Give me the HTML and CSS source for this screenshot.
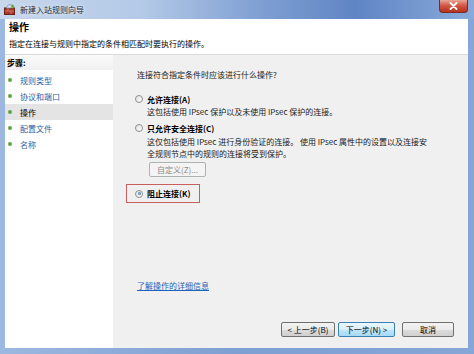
FILE: index.html
```html
<!DOCTYPE html>
<html>
<head>
    <meta charset="UTF-8">
    <title>新建入站规则向导</title>
    <link rel="stylesheet" href="styles.css">
</head>
<body>
    <div class="window">
        <!-- Title bar -->
        <div class="titlebar">
            <svg class="app-icon" width="11" height="11" viewBox="0 0 11 11">
                <rect x="0.5" y="4" width="10" height="6.5" fill="#a8372a" stroke="#6e1f16" stroke-width="1"/>
                <path d="M1 7 H10 M4 4 V7 M7 7 V10" stroke="#d98a70" stroke-width="0.8"/>
                <path d="M2 4 L4.5 0.8 L8.5 0.8 L9.5 4 Z" fill="#d6dde6" stroke="#7a8796" stroke-width="0.7"/>
                <circle cx="8.6" cy="2.4" r="1.4" fill="#5da83c"/>
            </svg>
            <span class="title">新建入站规则向导</span>
            <div class="close">
                <svg width="9" height="8" viewBox="0 0 9 8">
                    <path d="M1.5 1 L7.5 7 M7.5 1 L1.5 7" stroke="#fff" stroke-width="1.8" stroke-linecap="round"/>
                </svg>
            </div>
        </div>

        <div class="frame-body">
            <!-- Page header -->
            <div class="header">
                <div class="heading">操作</div>
                <div class="subheading">指定在连接与规则中指定的条件相匹配时要执行的操作。</div>
            </div>

            <div class="main">
                <!-- Steps -->
                <div class="steps">
                    <div class="steps-title">步骤:</div>
                    <ul class="step-list">
                        <li class="step">规则类型</li>
                        <li class="step">协议和端口</li>
                        <li class="step current">操作</li>
                        <li class="step">配置文件</li>
                        <li class="step">名称</li>
                    </ul>
                </div>

                <!-- Action choice -->
                <div class="content">
                    <p class="question">连接符合指定条件时应该进行什么操作?</p>

                    <div class="option option-first">
                        <span class="radio"></span>
                        <span class="option-label">允许连接(A)</span>
                    </div>
                    <p class="option-desc">这包括使用 IPsec 保护以及未使用 IPsec 保护的连接。</p>

                    <div class="option option-second">
                        <span class="radio"></span>
                        <span class="option-label">只允许安全连接(C)</span>
                    </div>
                    <p class="option-desc desc-long">这仅包括使用 IPsec 进行身份验证的连接。 使用 IPsec 属性中的设置以及连接安<br>全规则节点中的规则的连接将受到保护。</p>

                    <button class="btn btn-custom" disabled>自定义(Z)...</button>

                    <div class="option option-marked">
                        <span class="radio checked"></span>
                        <span class="option-label">阻止连接(K)</span>
                    </div>

                    <a class="more-link" href="#">了解操作的详细信息</a>

                    <div class="nav-buttons">
                        <button class="btn btn-back">&lt; 上一步(B)</button>
                        <button class="btn btn-next">下一步(N) &gt;</button>
                        <button class="btn btn-cancel">取消</button>
                    </div>
                </div>
            </div>
        </div>
    </div>
</body>
</html>
```

FILE: styles.css
```css
body { margin: 0; font-family: "Noto Sans CJK SC", "Noto Sans", sans-serif; font-size: 8px; color: #1a1a1a; }
.window { width: 474px; height: 354px; display: flex; flex-direction: column; background: linear-gradient(to right, #9cb8e0, #7e9fd2 50%, #86a6d8); box-sizing: border-box; }

/* title bar */
.titlebar { height: 19px; display: flex; align-items: center; padding-left: 4px; background: linear-gradient(to right, #c7d7ec 0%, #b3c9e7 30%, #7f9fd3 55%, #5f85c4 75%, #8aaadb 100%); flex-shrink: 0; }
.app-icon { margin-right: 5px; }
.title { color: #1c2838; line-height: 12px; text-shadow: 0 0 4px #fff; }
.close { margin-left: auto; margin-right: 6px; align-self: flex-start; width: 29px; height: 13px; display: flex; align-items: center; justify-content: center; background: linear-gradient(#e9a596, #d0523c 50%, #b8321e); border: 1px solid #7d2a22; border-top: none; border-radius: 0 0 4px 4px; box-sizing: border-box; }

.frame-body { flex: 1; display: flex; flex-direction: column; margin: 0 6px 6px 5px; min-height: 0; }

/* header */
.header { height: 36px; background: #fff; border-bottom: 1px solid #d9d9d9; padding: 2px 0 0 4px; box-sizing: border-box; }
.heading { font-size: 10px; font-weight: bold; line-height: 12px; color: #000; }
.subheading { margin-top: 5px; line-height: 12px; color: #000; }

.main { flex: 1; display: flex; min-height: 0; }

/* steps */
.steps { width: 108px; background: #fff; }
.steps-title { height: 15px; line-height: 15px; padding-left: 2px; font-weight: bold; color: #000; background: linear-gradient(#fafafa, #f1f1f1); }
.step-list { list-style: none; margin: 2px 0 0; padding: 0; }
.step { height: 16px; display: flex; align-items: center; padding-left: 3px; color: #2a5fa8; }
.step::before { content: ""; width: 4px; height: 4px; border-radius: 50%; background: #5ea83e; margin-right: 8px; }
.step.current { background: #e4e4e4; color: #000; }

/* content */
.content { flex: 1; display: flex; flex-direction: column; align-items: flex-start; background: #f0f0f0; padding: 14px 14px 11px 22px; }
.question { margin: 0 0 0 2px; line-height: 12px; }
.option { height: 12px; display: flex; align-items: center; gap: 4px; }
.option-label { font-weight: bold; color: #000; }
.option-first { margin-top: 12px; }
.option-second { margin-top: 4px; }
.option-desc { margin: 1px 0 0 12px; line-height: 12px; }
.desc-long { margin-top: 2px; }
.radio { width: 8px; height: 8px; border: 1px solid #8d8f91; border-radius: 50%; background: linear-gradient(135deg, #e2e3e4, #fdfdfd); box-sizing: border-box; position: relative; }
.radio.checked::after { content: ""; position: absolute; left: 1.5px; top: 1.5px; width: 3px; height: 3px; border-radius: 50%; background: radial-gradient(#7fb6d8, #2f6c98); }
.option-marked { margin: 7px 0 0 -9px; height: 19px; padding: 0 8px; border: 1px solid #c95e5e; box-sizing: border-box; }

.btn { font-family: inherit; font-size: 8px; height: 15px; padding: 0; border: 1px solid #707070; border-radius: 2px; background: linear-gradient(#f2f2f2 0%, #ebebeb 50%, #dddddd 51%, #cfcfcf 100%); color: #000; }
.btn-custom { margin: 2px 0 0 14px; width: 57px; border-color: #adb2b5; background: #f4f4f4; color: #8a8a8a; }

.more-link { margin: 77px 0 0 2px; line-height: 12px; color: #1f63b8; }

.nav-buttons { margin-top: auto; align-self: stretch; display: flex; justify-content: flex-end; }
.btn-back { width: 54px; }
.btn-next { width: 57px; margin-left: 3px; border-color: #3c7fb1; background: linear-gradient(#eaf6fd 0%, #d9f0fc 50%, #bee6fd 51%, #a7d9f5 100%); }
.btn-cancel { width: 52px; margin-left: 7px; }
```
